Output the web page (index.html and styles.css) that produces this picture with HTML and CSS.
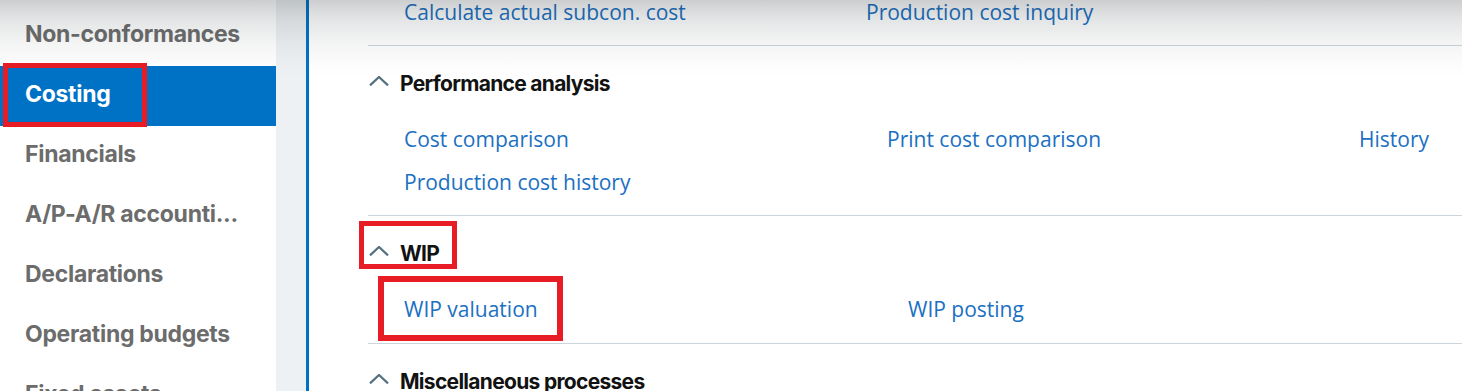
FILE: index.html
```html
<!DOCTYPE html>
<html lang="en">
<head>
<meta charset="utf-8">
<title>Costing</title>
<link rel="stylesheet" href="styles.css">
</head>
<body>
<div class="app">
  <nav class="sidebar">
    <div class="nav-item">Non-conformances</div>
    <div class="nav-item active">Costing<span class="mark mark-costing"></span></div>
    <div class="nav-item">Financials</div>
    <div class="nav-item">A/P-A/R accounti...</div>
    <div class="nav-item">Declarations</div>
    <div class="nav-item">Operating budgets</div>
    <div class="nav-item">Fixed assets</div>
  </nav>
  <div class="gutter"></div>
  <main class="content">
    <section class="group">
      <div class="links links-first cols-a">
        <a class="link">Calculate actual subcon. cost</a>
        <a class="link">Production cost inquiry</a>
      </div>
    </section>
    <section class="group">
      <h2 class="group-head"><span class="head-inner"><svg class="chev" viewBox="0 0 20 10" width="20" height="10"><path d="M1 9.4 L10 1 L19 9.4" fill="none" stroke="#56707f" stroke-width="2.2"/></svg>Performance analysis</span></h2>
      <div class="links cols-b">
        <a class="link">Cost comparison</a>
        <a class="link">Print cost comparison</a>
        <a class="link">History</a>
        <a class="link">Production cost history</a>
      </div>
    </section>
    <section class="group">
      <h2 class="group-head"><span class="head-inner"><svg class="chev" viewBox="0 0 20 10" width="20" height="10"><path d="M1 9.4 L10 1 L19 9.4" fill="none" stroke="#56707f" stroke-width="2.2"/></svg>WIP<span class="mark mark-wip"></span></span></h2>
      <div class="links cols-c">
        <a class="link">WIP valuation<span class="mark mark-val"></span></a>
        <a class="link">WIP posting</a>
      </div>
    </section>
    <section class="group">
      <h2 class="group-head"><span class="head-inner"><svg class="chev" viewBox="0 0 20 10" width="20" height="10"><path d="M1 9.4 L10 1 L19 9.4" fill="none" stroke="#56707f" stroke-width="2.2"/></svg>Miscellaneous processes</span></h2>
    </section>
  </main>
  <div class="top-shade"></div>
</div>
</body>
</html>
```
FILE: styles.css
```css
html, body {
  margin: 0;
  padding: 0;
  height: 391px;
  overflow: hidden;
  background: #ffffff;
}

.app {
  position: relative;
  display: flex;
  height: 391px;
  overflow: hidden;
}

.sidebar {
  width: 276px;
  flex: 0 0 276px;
  padding-top: 6px;
  background: #ffffff;
  font-family: "Inter", "Liberation Sans", sans-serif;
}

.nav-item {
  position: relative;
  height: 60px;
  display: flex;
  align-items: center;
  padding-left: 25px;
  padding-bottom: 4px;
  box-sizing: border-box;
  font-size: 23px;
  font-weight: 700;
  letter-spacing: -0.3px;
  color: #6c6c6c;
  white-space: nowrap;
}

.nav-item.active {
  background: #0072c6;
  color: #ffffff;
}

.gutter {
  width: 30px;
  flex: 0 0 30px;
  background: #eef1f3;
}

.content {
  flex: 1;
  border-left: 3px solid #0072c6;
  padding-left: 59px;
  background: #ffffff;
}

.group {
  border-bottom: 1px solid #cdd5dc;
}

.group:last-child {
  border-bottom: none;
}

.group-head {
  margin: 0;
  padding-top: 17px;
  height: 40px;
  display: flex;
  align-items: center;
  font-family: "Inter", "Liberation Sans", sans-serif;
  font-size: 21px;
  font-weight: 700;
  letter-spacing: -0.7px;
  color: #121212;
}

.head-inner {
  position: relative;
  display: inline-flex;
  align-items: center;
}

.chev {
  margin-left: 1px;
  margin-right: 11px;
  margin-top: -4px;
}

.links {
  display: grid;
  padding: 15px 0 11px 36px;
  font-family: "Open Sans", "Liberation Sans", sans-serif;
  font-size: 21px;
}

.links-first {
  margin-top: -9px;
  padding-top: 0;
}

.cols-a { grid-template-columns: 462px 1fr; }
.cols-b { grid-template-columns: 483px 472px 1fr; }
.cols-c { grid-template-columns: 504px 1fr; padding-bottom: 12px; }

.link {
  position: relative;
  line-height: 43px;
  color: #1b70c2;
  white-space: nowrap;
  justify-self: start;
}

.mark {
  position: absolute;
  border: 5px solid #e81c25;
  box-sizing: border-box;
  pointer-events: none;
}

.mark-costing {
  left: 3px;
  top: -3px;
  width: 144px;
  height: 64px;
}

.mark-wip {
  left: -9px;
  top: -20px;
  width: 98px;
  height: 48px;
}

.mark-val {
  left: -26px;
  top: -12px;
  width: 185px;
  height: 65px;
  border-width: 6px;
}

.top-shade {
  position: absolute;
  left: 0;
  right: 0;
  top: 0;
  height: 80px;
  pointer-events: none;
  background: linear-gradient(to bottom,
    rgba(20, 30, 35, 0.22) 0px,
    rgba(20, 30, 35, 0.12) 18px,
    rgba(20, 30, 35, 0.05) 42px,
    rgba(20, 30, 35, 0.01) 65px,
    rgba(20, 30, 35, 0) 80px);
}
```
